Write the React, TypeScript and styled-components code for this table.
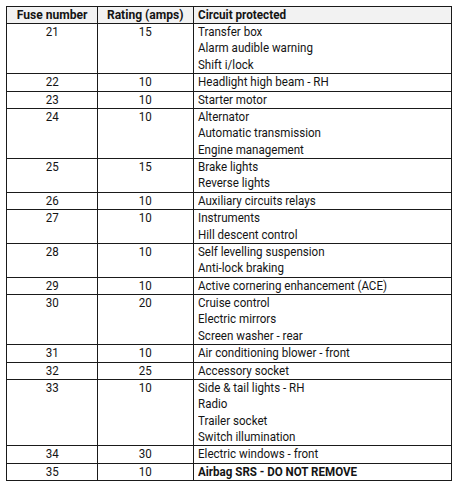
import React from 'react';
import styled, { createGlobalStyle } from 'styled-components';

const GlobalStyle = createGlobalStyle`
  html, body {
    margin: 0;
    padding: 0;
    background: #ffffff;
  }
`;

const Page = styled.div`
  padding: 6px 0 0 6px;
  font-family: "Roboto", "Liberation Sans", sans-serif;
  font-size: 13px;
  color: #141414;
`;

const Table = styled.table`
  border-collapse: collapse;
  width: 445px;
  table-layout: fixed;
`;

const Col = styled.col<{ w: number }>`
  width: ${(p) => p.w}px;
`;

const HeadCell = styled.th<{ align?: string }>`
  background: #f2f2f2;
  border: 1px solid #1a1a1a;
  font-weight: bold;
  text-align: ${(p) => p.align || 'center'};
  padding: 0 0 0 ${(p) => (p.align === 'left' ? 4 : 0)}px;
  line-height: 16px;
  height: 16px;
  overflow: hidden;
`;

const Cell = styled.td<{ align?: string; bold?: boolean }>`
  border: 1px solid #1a1a1a;
  vertical-align: top;
  text-align: ${(p) => p.align || 'center'};
  font-weight: ${(p) => (p.bold ? 'bold' : 'normal')};
  padding: 0 0 0 ${(p) => (p.align === 'left' ? 4 : 0)}px;
  line-height: 16.37px;
  overflow: hidden;
`;

// the reference uses a condensed face; squeeze Roboto to match
const Narrow = styled.span<{ left?: boolean; squeeze?: number }>`
  display: inline-block;
  white-space: nowrap;
  transform: scaleX(${(p) => p.squeeze || 0.89});
  transform-origin: ${(p) => (p.left ? 'left' : 'center')} center;
`;

const Line = styled.div`
  white-space: nowrap;
`;

type Fuse = { num: number; amps: number; circuits: string[]; bold?: boolean };

const fuses: Fuse[] = [
  { num: 21, amps: 15, circuits: ['Transfer box', 'Alarm audible warning', 'Shift i/lock'] },
  { num: 22, amps: 10, circuits: ['Headlight high beam - RH'] },
  { num: 23, amps: 10, circuits: ['Starter motor'] },
  { num: 24, amps: 10, circuits: ['Alternator', 'Automatic transmission', 'Engine management'] },
  { num: 25, amps: 15, circuits: ['Brake lights', 'Reverse lights'] },
  { num: 26, amps: 10, circuits: ['Auxiliary circuits relays'] },
  { num: 27, amps: 10, circuits: ['Instruments', 'Hill descent control'] },
  { num: 28, amps: 10, circuits: ['Self levelling suspension', 'Anti-lock braking'] },
  { num: 29, amps: 10, circuits: ['Active cornering enhancement (ACE)'] },
  { num: 30, amps: 20, circuits: ['Cruise control', 'Electric mirrors', 'Screen washer - rear'] },
  { num: 31, amps: 10, circuits: ['Air conditioning blower - front'] },
  { num: 32, amps: 25, circuits: ['Accessory socket'] },
  { num: 33, amps: 10, circuits: ['Side & tail lights - RH', 'Radio', 'Trailer socket', 'Switch illumination'] },
  { num: 34, amps: 30, circuits: ['Electric windows - front'] },
  { num: 35, amps: 10, circuits: ['Airbag SRS - DO NOT REMOVE'], bold: true },
];

const App = () => (
  <Page>
    <GlobalStyle />
    <Table>
      <colgroup>
        <Col w={91} />
        <Col w={96} />
        <Col w={258} />
      </colgroup>
      <thead>
        <tr>
          <HeadCell><Narrow squeeze={0.93}>Fuse number</Narrow></HeadCell>
          <HeadCell><Narrow squeeze={0.93}>Rating (amps)</Narrow></HeadCell>
          <HeadCell align="left"><Narrow left squeeze={0.9}>Circuit protected</Narrow></HeadCell>
        </tr>
      </thead>
      <tbody>
        {fuses.map((f) => (
          <tr key={f.num}>
            <Cell><Narrow>{f.num}</Narrow></Cell>
            <Cell><Narrow>{f.amps}</Narrow></Cell>
            <Cell align="left" bold={f.bold}>
              {f.circuits.map((c) => (
                <Line key={c}><Narrow left>{c}</Narrow></Line>
              ))}
            </Cell>
          </tr>
        ))}
      </tbody>
    </Table>
  </Page>
);

export default App;
